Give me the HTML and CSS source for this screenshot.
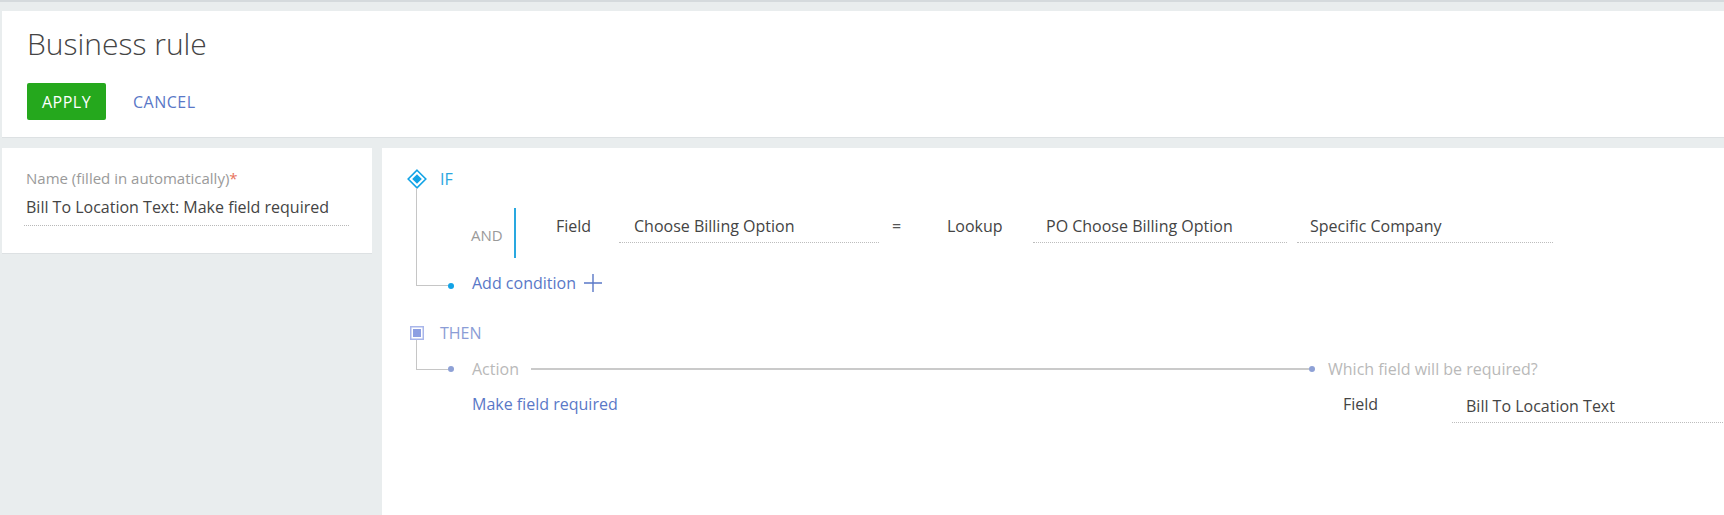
FILE: index.html
```html
<!DOCTYPE html>
<html lang="en">
<head>
<meta charset="utf-8">
<title>Business rule</title>
<link rel="stylesheet" href="styles.css">
</head>
<body>
<div class="topline"></div>
<header class="page-header">
  <h1 class="page-title">Business rule</h1>
  <div class="actions">
    <button class="btn btn-apply">APPLY</button>
    <button class="btn btn-cancel">CANCEL</button>
  </div>
</header>
<main class="main">
  <aside class="side">
    <div class="name-card">
      <div class="field-label">Name (filled in automatically)<span class="req">*</span></div>
      <div class="field-value">Bill To Location Text: Make field required</div>
    </div>
  </aside>
  <section class="rule-panel">
    <div class="block-head if-head">
      <svg class="block-icon" viewBox="0 0 20 20"><path d="M10 1.2 18.8 10 10 18.8 1.2 10Z" fill="none" stroke="#12a3e6" stroke-width="1.6"/><path d="M10 5.2 14.8 10 10 14.8 5.2 10Z" fill="#12a3e6"/></svg>
      <span class="block-title">IF</span>
    </div>
    <div class="block-body">
      <div class="rail if-rail"></div>
      <div class="block-content">
        <div class="condition">
          <span class="and">AND</span>
          <span class="and-bar"></span>
          <span class="cond-label cond-field">Field</span>
          <span class="input in-field">Choose Billing Option</span>
          <span class="op">=</span>
          <span class="cond-label cond-lookup">Lookup</span>
          <span class="input in-lookup">PO Choose Billing Option</span>
          <span class="input in-value">Specific Company</span>
        </div>
        <div class="add-row">
          <span class="dot dot-cyan"></span>
          <span class="link add-link">Add condition</span>
          <svg class="plus" viewBox="0 0 18 18"><path d="M9 0V18M0 9H18" stroke="#5a78c7" stroke-width="1.4" fill="none"/></svg>
        </div>
      </div>
    </div>
    <div class="block-head then-head">
      <svg class="block-icon" viewBox="0 0 20 20"><rect x="3.75" y="3.75" width="12.5" height="12.5" fill="none" stroke="#a9b6ea" stroke-width="1.5"/><rect x="6" y="6" width="8" height="8" fill="#8d9fe2"/></svg>
      <span class="block-title">THEN</span>
    </div>
    <div class="block-body">
      <div class="rail then-rail"></div>
      <div class="action-grid">
        <div class="action-head">
          <span class="dot dot-lav"></span>
          <span class="muted muted-action">Action</span>
          <span class="hline"></span>
        </div>
        <div class="action-head">
          <span class="dot dot-lav"></span>
          <span class="muted muted-which">Which field will be required?</span>
        </div>
        <div class="action-left"><span class="link">Make field required</span></div>
        <div class="action-right">
          <span class="action-label">Field</span>
          <span class="input in-target">Bill To Location Text</span>
        </div>
      </div>
    </div>
  </section>
</main>
</body>
</html>
```
FILE: styles.css
```css
* { box-sizing: border-box; }
html, body { margin: 0; height: 100%; }
body {
  font-family: "Open Sans", "Noto Sans", sans-serif;
  font-size: 16px;
  color: #444;
  background: #e9edee;
  display: flex;
  flex-direction: column;
  overflow: hidden;
}
.topline { height: 2px; background: #d5dadd; flex: none; }

.page-header {
  flex: none;
  height: 127px;
  margin: 9px 0 0 2px;
  padding: 13px 25px 0;
  background: #fff;
  border-bottom: 1px solid #dde1e3;
}
.page-title {
  margin: 0;
  font-weight: 300;
  font-size: 30px;
  line-height: 40px;
  color: #444;
}
.actions { display: flex; margin-top: 19px; }
.btn {
  font-family: inherit;
  font-size: 16px;
  letter-spacing: 0.5px;
  height: 37px;
  border: 0;
  border-radius: 2px;
  padding: 0;
  background: none;
  cursor: pointer;
}
.btn-apply { width: 79px; background: #25a81d; color: #fff; }
.btn-cancel { margin-left: 13px; padding: 0 14px; color: #5a78c7; }

.main {
  flex: 1;
  min-height: 0;
  display: flex;
  gap: 10px;
  margin-top: 10px;
  padding-left: 2px;
}
.side { width: 370px; flex: none; }
.name-card {
  height: 106px;
  background: #fff;
  padding: 20px 23px 0 22px;
  border-bottom: 1px solid #dde1e3;
}
.field-label { font-size: 15px; line-height: 20px; color: #9a9a9a; padding-left: 2px; }
.req { color: #e8735c; }
.field-value {
  margin-top: 8px;
  line-height: 22px;
  padding: 0 0 7px 2px;
  border-bottom: 1px dotted #b8b8b8;
  color: #444;
}

.rule-panel {
  flex: 1;
  min-width: 0;
  background: #fff;
  padding: 19px 0 0 25px;
  overflow: hidden;
}
.block-head { display: flex; align-items: center; height: 24px; }
.block-icon { width: 20px; height: 20px; flex: none; }
.block-title { margin-left: 13px; line-height: 24px; }
.if-head .block-title { color: #2aa6df; }
.then-head { margin-top: 27px; }
.then-head .block-title { color: #8b9dd6; }

.block-body { display: flex; align-items: flex-start; }
.rail {
  flex: none;
  width: 32px;
  margin-left: 9px;
  border-left: 1px solid #c6c6c6;
  border-bottom: 1px solid #c6c6c6;
}
.if-rail { margin-top: -3px; height: 98px; }
.then-rail { margin-top: -5px; height: 30px; }
.block-content { flex: 1; min-width: 0; }

.condition {
  display: flex;
  align-items: flex-start;
  height: 50px;
  margin-top: 17px;
  padding-left: 23px;
}
.and { flex: none; width: 43px; margin-top: 17px; font-size: 15px; line-height: 20px; color: #9a9a9a; }
.and-bar { flex: none; width: 2px; height: 50px; background: #29a8e0; }
.cond-label { flex: none; margin-top: 7px; line-height: 22px; color: #444; }
.cond-field { margin-left: 40px; width: 63px; }
.cond-lookup { width: 86px; }
.op { flex: none; width: 68px; padding-left: 13px; margin-top: 7px; line-height: 22px; color: #555; }
.input {
  flex: none;
  margin-top: 7px;
  line-height: 22px;
  padding: 0 0 5px 13px;
  border-bottom: 1px dotted #bdbdbd;
  color: #444;
  white-space: nowrap;
}
.in-field { width: 260px; padding-left: 15px; }
.in-lookup { width: 254px; }
.in-value { width: 256px; margin-left: 10px; }

.add-row { display: flex; align-items: center; height: 22px; margin-top: 14px; }
.dot { flex: none; width: 6px; height: 6px; border-radius: 50%; }
.dot-cyan { background: #12a3e6; margin-top: 5px; }
.dot-lav { background: #8ea1d6; }
.link { color: #5a78c7; line-height: 22px; }
.add-link { margin-left: 18px; }
.plus { width: 18px; height: 18px; margin-left: 8px; flex: none; }

.action-grid {
  flex: none;
  display: grid;
  grid-template-columns: 861px 500px;
  margin-top: 13px;
}
.action-head { display: flex; align-items: center; height: 22px; }
.muted { color: #b9b9b9; line-height: 22px; white-space: nowrap; }
.muted-action { margin-left: 18px; }
.muted-which { margin-left: 13px; }
.hline { flex: 1; height: 2px; margin-left: 12px; background: #cacaca; }
.action-left { margin-top: 13px; padding-left: 24px; line-height: 22px; }
.action-right { margin-top: 13px; display: flex; align-items: flex-start; }
.action-label { flex: none; width: 143px; padding-left: 34px; line-height: 22px; color: #444; }
.in-target { width: 357px; margin-top: 2px; padding-left: 14px; }
```
